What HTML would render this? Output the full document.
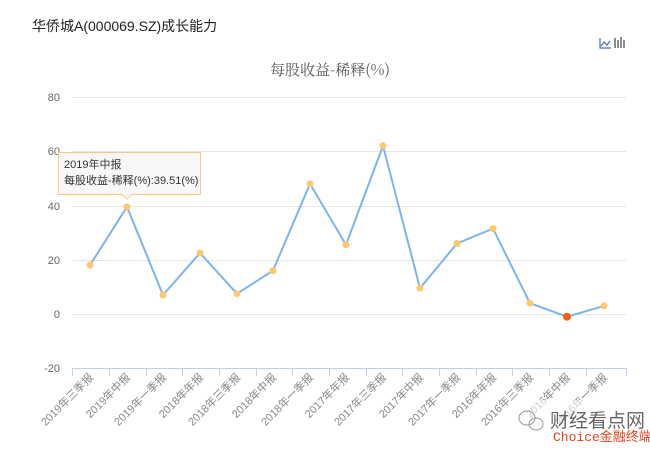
<!DOCTYPE html><html><head><meta charset="utf-8"><style>body{margin:0;width:650px;height:447px;background:#fff;overflow:hidden;font-family:"Liberation Sans","Noto Sans CJK SC",sans-serif}</style></head><body>
<svg width="650" height="447" xmlns="http://www.w3.org/2000/svg" font-family="Liberation Sans, Noto Sans CJK SC, sans-serif">
<text x="32" y="31" font-size="14" fill="#222">华侨城A(000069.SZ)成长能力</text>
<g stroke="#4a6fc0" stroke-width="1.2" fill="none"><path d="M600 38V48H611"/><path d="M601 46L604 42L607 45L610 41"/></g>
<g stroke="#666" stroke-width="1.5"><path d="M615 38V48M618 40V48M621 37V48M624 40V48"/></g>
<text x="330" y="75" font-size="15" fill="#555" text-anchor="middle" font-family="Noto Serif CJK SC, serif">每股收益-稀释(%)</text>
<g stroke="#e6e6e6" stroke-width="1"><path d="M72 97.5H626M72 151.5H626M72 206.5H626M72 260.5H626M72 314.5H626"/></g>
<g font-size="11" fill="#666" text-anchor="end"><text x="60" y="101">80</text><text x="60" y="155">60</text><text x="60" y="210">40</text><text x="60" y="264">20</text><text x="60" y="318">0</text><text x="60" y="372">-20</text></g>
<path d="M72 368.5H627" stroke="#c0d0e8"/>
<g stroke="#c0d0e8" id="t"></g>
<polyline fill="none" stroke="#7cb5ec" stroke-width="2" points="90,265.2 127,206.8 163,295 200,253 237,293.7 273,270.6 310,183.8 346,244.8 383,145.8 420,288.2 457,243.5 493,228.6 530,303.2 567,316.7 604,305.9"/>
<g fill="#fcc870"><circle cx="90" cy="265.2" r="3.5"/><circle cx="127" cy="206.8" r="3.5"/><circle cx="163" cy="295" r="3.5"/><circle cx="200" cy="253" r="3.5"/><circle cx="237" cy="293.7" r="3.5"/><circle cx="273" cy="270.6" r="3.5"/><circle cx="310" cy="183.8" r="3.5"/><circle cx="346" cy="244.8" r="3.5"/><circle cx="383" cy="145.8" r="3.5"/><circle cx="420" cy="288.2" r="3.5"/><circle cx="457" cy="243.5" r="3.5"/><circle cx="493" cy="228.6" r="3.5"/><circle cx="530" cy="303.2" r="3.5"/><circle cx="604" cy="305.9" r="3.5"/></g>
<circle cx="567" cy="316.7" r="4" fill="#f06010"/>
<path d="M58.5 152.5H200.5V194.5H132L127 199L122 194.5H58.5Z" fill="#f7f7f7" fill-opacity="0.95" stroke="#f5cd80"/>
<text x="64" y="168" font-size="11" fill="#333">2019年中报</text>
<text x="64" y="184" font-size="11" fill="#333">每股收益-稀释(%):39.51(%)</text>
<g font-size="11" fill="#888" text-anchor="end">
<text transform="translate(94,378) rotate(-45)">2019年三季报</text>
<text transform="translate(131,378) rotate(-45)">2019年中报</text>
<text transform="translate(167,378) rotate(-45)">2019年一季报</text>
<text transform="translate(204,378) rotate(-45)">2018年年报</text>
<text transform="translate(241,378) rotate(-45)">2018年三季报</text>
<text transform="translate(277,378) rotate(-45)">2018年中报</text>
<text transform="translate(314,378) rotate(-45)">2018年一季报</text>
<text transform="translate(350,378) rotate(-45)">2017年年报</text>
<text transform="translate(387,378) rotate(-45)">2017年三季报</text>
<text transform="translate(424,378) rotate(-45)">2017年中报</text>
<text transform="translate(461,378) rotate(-45)">2017年一季报</text>
<text transform="translate(497,378) rotate(-45)">2016年年报</text>
<text transform="translate(534,378) rotate(-45)">2016年三季报</text>
<text transform="translate(571,378) rotate(-45)">2016年中报</text>
<text transform="translate(608,378) rotate(-45)">2016年一季报</text>
</g>
<g stroke="#c0d0e8"><path d="M72.5 368V376M109.5 368V376M146.5 368V376M182.5 368V376M219.5 368V376M256.5 368V376M292.5 368V376M329.5 368V376M366.5 368V376M402.5 368V376M439.5 368V376M476.5 368V376M512.5 368V376M549.5 368V376M586.5 368V376M626.5 368V376"/></g>
<rect x="515" y="400" width="135" height="47" fill="#fff" fill-opacity="0.6"/>
<g stroke="#999" fill="none" stroke-width="1"><ellipse cx="527" cy="418" rx="8" ry="7"/><ellipse cx="536" cy="424" rx="7" ry="6"/></g>
<text x="550" y="427" font-size="19" fill="#666">财经看点网</text>
<text x="553" y="441" font-size="13" fill="#e8401a" font-family="Liberation Mono, Noto Sans CJK SC, monospace">Choice金融终端</text>
</svg></body></html>
